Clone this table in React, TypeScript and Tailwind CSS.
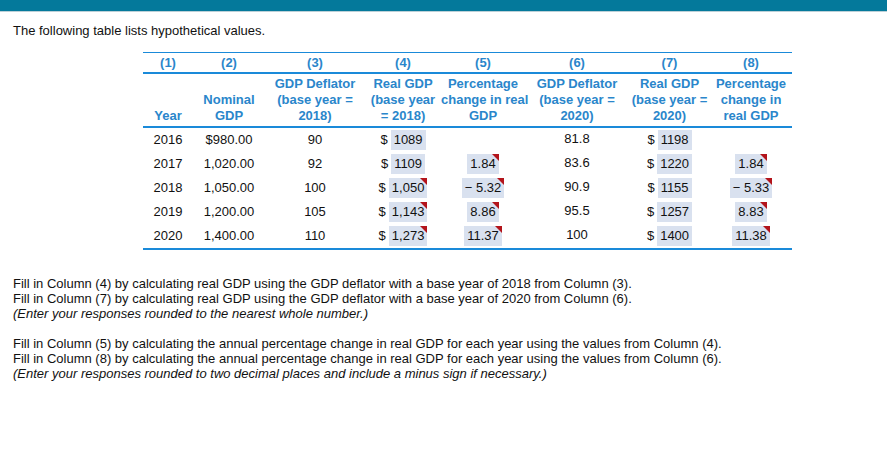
type Cell = { value: string; flag?: boolean } | null;

interface Row {
  year: string;
  nominal: string;
  deflator2018: string;
  real2018: Cell;
  pct2018: Cell;
  deflator2020: string;
  real2020: Cell;
  pct2020: Cell;
}

const rows: Row[] = [
  {
    year: '2016',
    nominal: '$980.00',
    deflator2018: '90',
    real2018: { value: '1089' },
    pct2018: null,
    deflator2020: '81.8',
    real2020: { value: '1198' },
    pct2020: null,
  },
  {
    year: '2017',
    nominal: '1,020.00',
    deflator2018: '92',
    real2018: { value: '1109' },
    pct2018: { value: '1.84', flag: true },
    deflator2020: '83.6',
    real2020: { value: '1220' },
    pct2020: { value: '1.84', flag: true },
  },
  {
    year: '2018',
    nominal: '1,050.00',
    deflator2018: '100',
    real2018: { value: '1,050', flag: true },
    pct2018: { value: '− 5.32', flag: true },
    deflator2020: '90.9',
    real2020: { value: '1155' },
    pct2020: { value: '− 5.33', flag: true },
  },
  {
    year: '2019',
    nominal: '1,200.00',
    deflator2018: '105',
    real2018: { value: '1,143', flag: true },
    pct2018: { value: '8.86', flag: true },
    deflator2020: '95.5',
    real2020: { value: '1257' },
    pct2020: { value: '8.83', flag: true },
  },
  {
    year: '2020',
    nominal: '1,400.00',
    deflator2018: '110',
    real2018: { value: '1,273', flag: true },
    pct2018: { value: '11.37', flag: true },
    deflator2020: '100',
    real2020: { value: '1400' },
    pct2020: { value: '11.38', flag: true },
  },
];

const cols = 'grid grid-cols-[50px_72px_100px_76px_84px_104px_81px_82px]';

function AnswerBox({ cell }: { cell: Cell }) {
  if (!cell) return null;
  return (
    <span className="relative inline-block h-[20px] bg-[#d9e1ef] px-[3px] leading-[20px] whitespace-pre">
      {cell.value}
      {cell.flag && (
        <span className="absolute right-0 top-0 h-0 w-0 border-l-[7px] border-t-[7px] border-l-transparent border-t-[#b3141b]" />
      )}
    </span>
  );
}

function MoneyBox({ cell }: { cell: Cell }) {
  return (
    <span className="inline-flex items-center gap-[3px]">
      <span>$</span>
      <AnswerBox cell={cell} />
    </span>
  );
}

const headers: string[][] = [
  ['Year'],
  ['Nominal', 'GDP'],
  ['GDP Deflator', '(base year =', '2018)'],
  ['Real GDP', '(base year', '= 2018)'],
  ['Percentage', 'change in real', 'GDP'],
  ['GDP Deflator', '(base year =', '2020)'],
  ['Real GDP', '(base year =', '2020)'],
  ['Percentage', 'change in', 'real GDP'],
];

export default function App() {
  return (
    <div className="min-h-[475px] bg-white font-['Liberation_Sans',Arial,sans-serif] text-[13px] text-[#111]">
      <div className="h-[11px] bg-[#04799b]" />
      <div className="h-px bg-[#bcd0d7]" />

      <div className="px-[13px] pt-[11px]">
        <p className="leading-[15px]">The following table lists hypothetical values.</p>

        <div className="ml-[130px] mt-[14px] w-[649px]">
          <div className={`${cols} h-[20px] border-t border-[#1a8ad9] text-center font-bold leading-[19px] text-[#2a86cb]`}>
            {['(1)', '(2)', '(3)', '(4)', '(5)', '(6)', '(7)', '(8)'].map((n) => (
              <div key={n}>{n}</div>
            ))}
          </div>
          <div className={`${cols} items-end border-y-2 border-[#1a8ad9] py-[2px] text-center font-bold leading-[16px] text-[#2a86cb]`}>
            {headers.map((lines, i) => (
              <div key={i} className="whitespace-nowrap">
                {lines.map((line) => (
                  <div key={line}>{line}</div>
                ))}
              </div>
            ))}
          </div>

          <div className="border-b-2 border-[#1a8ad9]">
            {rows.map((row) => (
              <div key={row.year} className={`${cols} h-[24px] items-center text-center leading-[20px]`}>
                <div>{row.year}</div>
                <div>{row.nominal}</div>
                <div>{row.deflator2018}</div>
                <div>
                  <MoneyBox cell={row.real2018} />
                </div>
                <div>
                  <AnswerBox cell={row.pct2018} />
                </div>
                <div className="-mt-[2px]">{row.deflator2020}</div>
                <div>
                  <MoneyBox cell={row.real2020} />
                </div>
                <div>
                  <AnswerBox cell={row.pct2020} />
                </div>
              </div>
            ))}
          </div>
        </div>

        <div className="mt-[26px] leading-[15px]">
          <p>Fill in Column (4) by calculating real GDP using the GDP deflator with a base year of 2018 from Column (3).</p>
          <p>Fill in Column (7) by calculating real GDP using the GDP deflator with a base year of 2020 from Column (6).</p>
          <p className="italic">(Enter your responses rounded to the nearest whole number.)</p>
        </div>

        <div className="mt-[15px] leading-[15px]">
          <p>Fill in Column (5) by calculating the annual percentage change in real GDP for each year using the values from Column (4).</p>
          <p>Fill in Column (8) by calculating the annual percentage change in real GDP for each year using the values from Column (6).</p>
          <p className="italic">(Enter your responses rounded to two decimal places and include a minus sign if necessary.)</p>
        </div>
      </div>
    </div>
  );
}
